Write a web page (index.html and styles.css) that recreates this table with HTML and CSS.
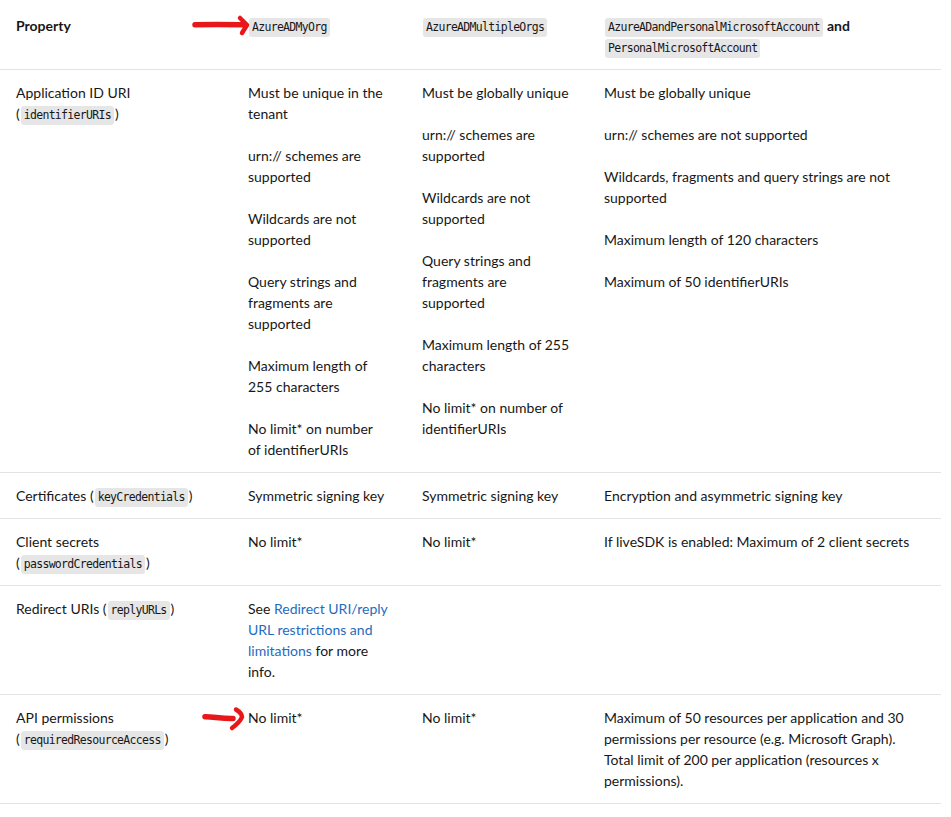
FILE: index.html
```html
<!DOCTYPE html>
<html lang="en">
<head>
<meta charset="utf-8">
<title>App manifest limits</title>
<link rel="stylesheet" href="styles.css">
</head>
<body>
<div class="page">
<table class="limits">
  <colgroup>
    <col class="c1"><col class="c2"><col class="c3"><col class="c4">
  </colgroup>
  <thead>
    <tr>
      <th>Property</th>
      <th><code>AzureADMyOrg</code></th>
      <th><code>AzureADMultipleOrgs</code></th>
      <th><code>AzureADandPersonalMicrosoftAccount</code> and <code>PersonalMicrosoftAccount</code></th>
    </tr>
  </thead>
  <tbody>
    <tr>
      <td>Application ID URI (<code>identifierURIs</code>)</td>
      <td>
        <p>Must be unique in the tenant</p>
        <p>urn:// schemes are supported</p>
        <p>Wildcards are not supported</p>
        <p>Query strings and fragments are supported</p>
        <p>Maximum length of 255 characters</p>
        <p>No limit* on number of&nbsp;identifierURIs</p>
      </td>
      <td>
        <p>Must be globally unique</p>
        <p>urn:// schemes are supported</p>
        <p>Wildcards are not supported</p>
        <p>Query strings and fragments are supported</p>
        <p>Maximum length of 255 characters</p>
        <p>No limit* on number of identifierURIs</p>
      </td>
      <td>
        <p>Must be globally unique</p>
        <p>urn:// schemes are not supported</p>
        <p>Wildcards, fragments and query strings are not supported</p>
        <p>Maximum length of 120 characters</p>
        <p>Maximum of 50 identifierURIs</p>
      </td>
    </tr>
    <tr>
      <td>Certificates (<code>keyCredentials</code>)</td>
      <td>Symmetric signing key</td>
      <td>Symmetric signing key</td>
      <td>Encryption and asymmetric signing key</td>
    </tr>
    <tr>
      <td>Client secrets (<code>passwordCredentials</code>)</td>
      <td>No limit*</td>
      <td>No limit*</td>
      <td>If liveSDK is enabled: Maximum of 2 client secrets</td>
    </tr>
    <tr>
      <td>Redirect URIs (<code>replyURLs</code>)</td>
      <td>See <a href="#">Redirect URI/reply URL restrictions and limitations</a> for more info.</td>
      <td></td>
      <td></td>
    </tr>
    <tr>
      <td>API permissions (<code>requiredResourceAccess</code>)</td>
      <td>No limit*</td>
      <td>No limit*</td>
      <td>Maximum of 50 resources per application and 30 permissions per resource (e.g. Microsoft Graph). Total limit of 200 per application (resources x permissions).</td>
    </tr>
  </tbody>
</table>

<svg class="arrow arrow-top" width="62" height="26" viewBox="0 0 62 26" aria-hidden="true">
  <path class="shaft" d="M5 12.7 C 18 12.3, 36 12.3, 52 12.8" />
  <path d="M50 6 L 57 13 L 52 21" />
</svg>
<svg class="arrow arrow-bottom" width="46" height="28" viewBox="0 0 46 28" aria-hidden="true">
  <path class="shaft" d="M5 12.7 C 13 12.5, 21 14.8, 33 14.5" />
  <path d="M36 5.5 C 40 8, 42 11, 42 13 C 40 18, 36 21, 32 24" />
</svg>
</div>
</body>
</html>
```

FILE: styles.css
```css
html, body {
  margin: 0;
  padding: 0;
  background: #ffffff;
}

.page {
  position: relative;
  padding-top: 3px;
  font-family: Lato, "Segoe UI", "Noto Sans", sans-serif;
  font-size: 14px;
  line-height: 21px;
  color: #171717;
}

.limits {
  border-collapse: collapse;
  table-layout: fixed;
  width: 941px;
}

.c1 { width: 232px; }
.c2 { width: 174px; }
.c3 { width: 182px; }
.c4 { width: 353px; }

.limits th,
.limits td {
  text-align: left;
  vertical-align: top;
  padding: 12px 16px;
  border-bottom: 1px solid #e3e3e3;
}

.limits th {
  font-weight: 700;
}

.limits p {
  margin: 0;
}

.limits p + p {
  margin-top: 21px;
}

code {
  font-family: "DejaVu Sans Mono", "Liberation Mono", monospace;
  font-size: 11.5px;
  line-height: 1;
  letter-spacing: -0.7px;
  font-weight: 400;
  background: #e6e6e6;
  border-radius: 3px;
  padding: 2px 3px 3px 3px;
  margin: 0 1px;
  color: #171717;
}

a {
  color: #1f6bbf;
  text-decoration: none;
}

.arrow {
  position: absolute;
  fill: none;
  stroke: #e8171a;
  stroke-width: 4.5;
  stroke-linecap: round;
  stroke-linejoin: round;
}

.arrow .shaft {
  stroke-width: 5.5;
}

.arrow-top {
  left: 190px;
  top: 12px;
}

.arrow-bottom {
  left: 200px;
  top: 704px;
}
```
